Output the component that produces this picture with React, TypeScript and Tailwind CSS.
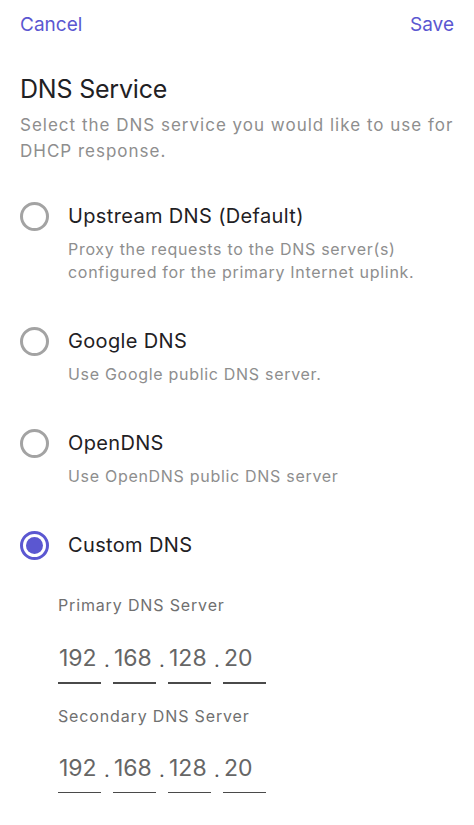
import React from "react";

const PURPLE = "text-[#5b57d1]";

function Radio({ checked }: { checked?: boolean }) {
  if (checked) {
    return (
      <div className="w-[29px] h-[29px] rounded-full border-[3px] border-[#5b57d1] flex items-center justify-center shrink-0">
        <div className="w-[17px] h-[17px] rounded-full bg-[#5b57d1]" />
      </div>
    );
  }
  return <div className="w-[29px] h-[29px] rounded-full border-[3px] border-[#a3a3a3] shrink-0" />;
}

function Option({
  label,
  desc,
  checked,
  first,
}: {
  label: string;
  desc?: string[];
  checked?: boolean;
  first?: boolean;
}) {
  return (
    <div className={first ? "mt-[37px]" : "mt-[42px]"}>
      <div className="flex items-center h-[30px]">
        <Radio checked={checked} />
        <span className="ml-[19px] text-[20px] tracking-[0.35px] text-[#1f2124] leading-[30px]">{label}</span>
      </div>
      {desc && (
        <div className="ml-[48px] mt-[7px] text-[16px] tracking-[0.7px] leading-[23px] text-[#8e8e8e]">
          {desc.map((d) => (
            <div key={d}>{d}</div>
          ))}
        </div>
      )}
    </div>
  );
}

function IpField({ parts }: { parts: string[] }) {
  return (
    <div className="flex items-start">
      {parts.map((p, i) => (
        <React.Fragment key={i}>
          {i > 0 && (
            <div className="w-[12px] h-[28px] text-[20px] leading-[32px] text-[#555] text-center">.</div>
          )}
          <div className="w-[43px] flex flex-col">
            <div className="h-[28px] text-[23px] leading-[28px] text-[#666] pl-[1px]">{p}</div>
            <div className="mt-[10px] h-[1.5px] bg-[#4a4a4a]" />
          </div>
        </React.Fragment>
      ))}
    </div>
  );
}

export default function App() {
  return (
    <div
      className="w-[474px] h-[825px] bg-white overflow-hidden"
      style={{ fontFamily: "Inter, 'Noto Sans', sans-serif" }}
    >
      <div className="h-[50px] px-5 flex items-center justify-between text-[19px]">
        <span className={PURPLE}>Cancel</span>
        <span className={PURPLE}>Save</span>
      </div>
      <div className="px-5">
        <div className="mt-[23px] text-[25px] tracking-[-0.2px] leading-[32px] text-[#1f2124]">DNS Service</div>
        <div className="mt-[7px] text-[17px] tracking-[1px] leading-[26px] text-[#8e8e8e]">
          <div>Select the DNS service you would like to use for</div>
          <div>DHCP response.</div>
        </div>
        <Option
          first
          label="Upstream DNS (Default)"
          desc={["Proxy the requests to the DNS server(s)", "configured for the primary Internet uplink."]}
        />
        <Option label="Google DNS" desc={["Use Google public DNS server."]} />
        <Option label="OpenDNS" desc={["Use OpenDNS public DNS server"]} />
        <Option label="Custom DNS" checked />
        <div className="ml-[38px]">
          <div className="mt-[34px] text-[16px] tracking-[0.85px] leading-[22px] text-[#707070]">Primary DNS Server</div>
          <div className="mt-[28px]">
            <IpField parts={["192", "168", "128", "20"]} />
          </div>
          <div className="mt-[21px] text-[16px] tracking-[0.85px] leading-[22px] text-[#707070]">Secondary DNS Server</div>
          <div className="mt-[27px]">
            <IpField parts={["192", "168", "128", "20"]} />
          </div>
        </div>
      </div>
    </div>
  );
}
